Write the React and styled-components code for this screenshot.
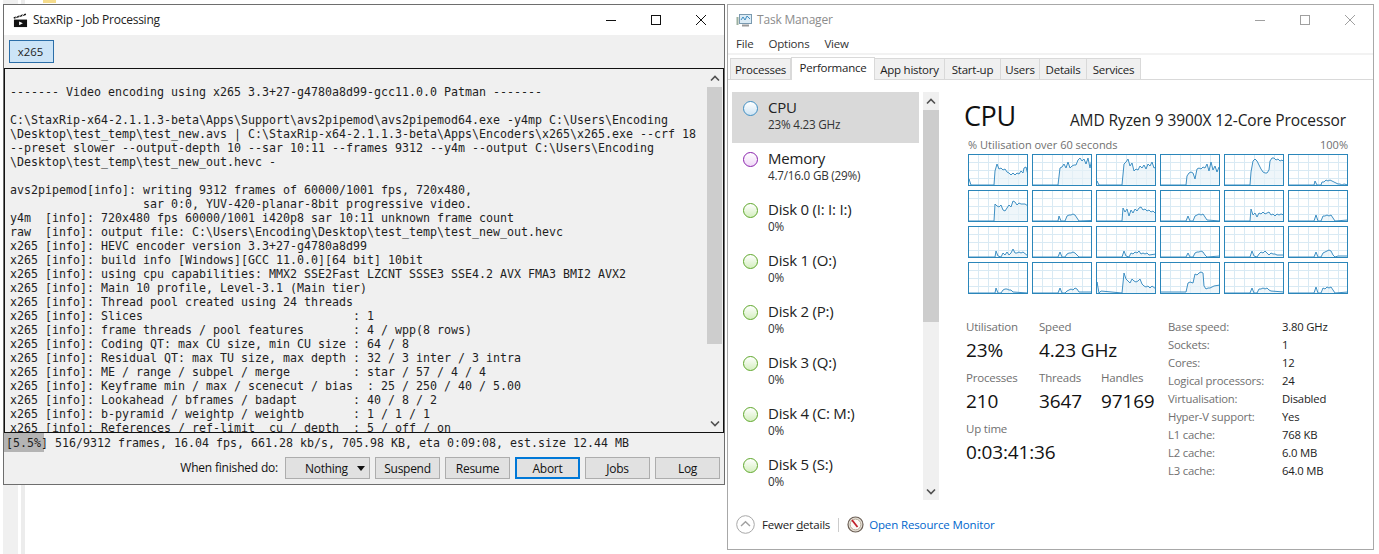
import React from "react";
import styled, { createGlobalStyle } from "styled-components";

const ui = `"Open Sans", "Noto Sans", sans-serif`;
const mono = `"DejaVu Sans Mono", "Liberation Mono", monospace`;

const Global = createGlobalStyle`
  html, body { margin: 0; padding: 0; background: #fff; }
  body { width: 1379px; height: 554px; overflow: hidden; font-family: ${ui}; }
  #root { width: 1379px; height: 554px; }
`;

const Desktop = styled.div`
  position: relative;
  width: 1379px;
  height: 554px;
  background: #fff;
  overflow: hidden;
`;
const BackStrip = styled.div`
  position: absolute;
  left: 3px;
  top: 0;
  bottom: 0;
  width: 15px;
  background: #f0f0f0;
  border-right: 3px solid #fff;
  box-shadow: 4px 0 0 #ececec;
  clip-path: inset(0 -5px 0 0);
`;
const BackFolder = styled.div`
  position: absolute;
  left: 43px;
  top: 0;
  width: 13px;
  height: 3px;
  background: #f6dc8c;
`;
const Win = styled.div`
  position: absolute;
  left: ${(p) => p.$x}px;
  top: ${(p) => p.$y}px;
  width: ${(p) => p.$w}px;
  height: ${(p) => p.$h}px;
  box-sizing: border-box;
  border: 1px solid ${(p) => p.$edge};
  background: ${(p) => p.$bg};
  display: flex;
  flex-direction: column;
`;
const TitleBar = styled.div`
  flex: 0 0 30px;
  display: flex;
  align-items: center;
  background: #fff;
  padding-left: ${(p) => p.$pad}px;
`;
const TitleText = styled.span`
  font-size: 12px;
  letter-spacing: ${(p) => p.$ls}px;
  color: ${(p) => p.$c};
  flex: 1;
  margin-left: ${(p) => p.$ml}px;
  padding-bottom: 2px;
`;
const Caption = styled.div`
  display: flex;
  align-items: center;
  justify-content: center;
  width: ${(p) => p.$w}px;
  height: 30px;
`;

/* StaxRip */
const Toolbar = styled.div`
  flex: 0 0 33px;
  box-sizing: border-box;
  padding: 5px 0 0 5px;
`;
const TabChip = styled.div`
  box-sizing: border-box;
  width: 45px;
  height: 23px;
  padding-right: 2px;
  border: 1px solid #2b6ea8;
  background: #cce4f7;
  display: flex;
  align-items: center;
  justify-content: center;
  font-size: 11.3px;
  color: #222;
`;
const LogBox = styled.div`
  flex: 0 0 365px;
  box-sizing: border-box;
  border: 1px solid #111;
  display: flex;
  background: #f0f0f0;
  overflow: hidden;
`;
const LogText = styled.pre`
  flex: 1;
  margin: 0;
  padding: 2px 0 0 5px;
  font-family: ${mono};
  font-size: 11.63px;
  line-height: 14px;
  color: #1e1e1e;
  overflow: hidden;
`;
const Scroll = styled.div`
  flex: 0 0 ${(p) => p.$w}px;
  height: ${(p) => p.$h};
  margin-right: ${(p) => p.$mr}px;
  background: #f0f0f0;
  display: flex;
  flex-direction: column;
`;
const ScrollEnd = styled.div`
  flex: 0 0 18px;
  display: flex;
  align-items: center;
  justify-content: center;
`;
const ScrollThumb = styled.div`
  flex: 0 0 ${(p) => p.$h}px;
  background: #cdcdcd;
`;
const ScrollGap = styled.div`
  flex: 1;
`;
const Status = styled.div`
  flex: 0 0 20px;
  position: relative;
  display: flex;
  align-items: center;
  padding-left: 2px;
  font-family: ${mono};
  font-size: 11.63px;
  color: #1e1e1e;
  white-space: pre;
`;
const Progress = styled.div`
  position: absolute;
  left: 0;
  top: 0;
  bottom: 1px;
  background: #b4b4b4;
`;
const StatusText = styled.span`
  position: relative;
`;
const Actions = styled.div`
  flex: 1;
  display: flex;
  align-items: flex-start;
  justify-content: flex-end;
  gap: 5px;
  padding: 4px 4px 0 0;
`;
const ActionLabel = styled.span`
  font-size: 12px;
  letter-spacing: -0.2px;
  color: #111;
  line-height: 22px;
  margin-right: 2px;
`;
const Btn = styled.div`
  box-sizing: border-box;
  width: ${(p) => p.$w}px;
  height: 22px;
  background: #e1e1e1;
  border: ${(p) => (p.$primary ? "2px solid #0078d7" : "1px solid #adadad")};
  display: flex;
  align-items: center;
  justify-content: center;
  font-size: 12px;
  letter-spacing: -0.3px;
  color: #111;
`;
const DropBtn = styled(Btn)`
  justify-content: flex-start;
  padding-left: 19px;
  gap: 9px;
`;

/* Task manager */
const MenuBar = styled.div`
  flex: 0 0 20px;
  display: flex;
  padding: 0 0 2px 8px;
  gap: 15px;
  align-items: center;
  font-size: 11.5px;
  letter-spacing: -0.2px;
  color: #333;
  border-bottom: 2px solid #f2f2f2;
  box-sizing: border-box;
`;
const Tabs = styled.div`
  flex: 0 0 25px;
  display: flex;
  align-items: flex-end;
  padding-left: 2px;
  border-bottom: 1px solid #d9d9d9;
  box-sizing: border-box;
  position: relative;
`;
const Tab = styled.div`
  box-sizing: border-box;
  width: ${(p) => p.$w}px;
  height: ${(p) => (p.$on ? 23 : 21)}px;
  margin-bottom: ${(p) => (p.$on ? -1 : 0)}px;
  background: ${(p) => (p.$on ? "#fff" : "#f0f0f0")};
  border: 1px solid #d9d9d9;
  border-left-width: ${(p) => (p.$first || p.$on ? 1 : 0)}px;
  border-bottom: ${(p) => (p.$on ? "none" : "0")};
  display: flex;
  align-items: center;
  justify-content: center;
  padding-bottom: ${(p) => (p.$on ? 3 : 0)}px;
  font-size: 11.5px;
  letter-spacing: -0.25px;
  color: #1c1c1c;
  white-space: nowrap;
`;
const Body = styled.div`
  flex: 1;
  display: flex;
  padding: 12px 0 0 4px;
  min-height: 0;
`;
const Side = styled.div`
  flex: 0 0 187px;
  height: 408px;
  margin-right: 4px;
`;
const Row = styled.div`
  box-sizing: border-box;
  height: 51px;
  padding-left: 11px;
  display: flex;
  align-items: flex-start;
  background: ${(p) => (p.$on ? "#d9d9d9" : "transparent")};
`;
const Dot = styled.div`
  box-sizing: border-box;
  width: 15px;
  height: 15px;
  margin-top: 9px;
  border-radius: 50%;
  border: 1px solid ${(p) => p.$c};
  background: linear-gradient(180deg, #fff 0%, ${(p) => p.$f} 100%);
  flex: none;
`;
const RowText = styled.div`
  margin-left: 10px;
  display: flex;
  flex-direction: column;
  padding-top: 4px;
`;
const RowTitle = styled.div`
  font-size: 15px;
  line-height: 22px;
  color: #222;
  letter-spacing: -0.22px;
`;
const RowSub = styled.div`
  font-size: 11.7px;
  line-height: 13px;
  letter-spacing: -0.22px;
  color: #333;
`;
const Pane = styled.div`
  flex: 1;
  padding-left: 29px;
  display: flex;
  flex-direction: column;
`;
const Head = styled.div`
  display: flex;
  align-items: baseline;
  justify-content: space-between;
  height: 42px;
  padding-right: 27px;
  margin-left: -4px;
`;
const Big = styled.div`
  font-size: 27px;
  line-height: 48px;
  color: #111;
  letter-spacing: -0.4px;
`;
const Model = styled.div`
  font-size: 15.5px;
  color: #222;
  letter-spacing: -0.1px;
`;
const AxisRow = styled.div`
  display: flex;
  justify-content: space-between;
  width: 380px;
  font-size: 11px;
  line-height: 16px;
  color: #707070;
  margin-top: 3px;
`;
const Graphs = styled.div`
  display: grid;
  grid-template-columns: repeat(6, 60px);
  grid-auto-rows: 32px;
  gap: 4px;
  margin-top: 1px;
`;
const GraphSvg = styled.svg`
  display: block;
`;
const StatsWrap = styled.div`
  display: flex;
  margin-top: 24px;
  margin-left: -2px;
`;
const StatsLeft = styled.div`
  width: 202px;
  display: grid;
  grid-template-columns: 73px 62px auto;
  grid-auto-rows: 51px;
`;
const Stat = styled.div`
  grid-column: span ${(p) => p.$span || 1};
  display: flex;
  flex-direction: column;
  white-space: nowrap;
`;
const StatLabel = styled.div`
  font-size: 11.5px;
  line-height: 18px;
  letter-spacing: -0.2px;
  color: #707070;
`;
const StatValue = styled.div`
  font-size: 19px;
  line-height: 28px;
  letter-spacing: -0.15px;
  color: #111;
`;
const Facts = styled.div`
  display: grid;
  grid-template-columns: 114px auto;
  grid-auto-rows: 18px;
  font-size: 11.3px;
  line-height: 18px;
  letter-spacing: -0.2px;
`;
const FactKey = styled.div`
  color: #707070;
  white-space: nowrap;
`;
const FactVal = styled.div`
  color: #222;
  white-space: nowrap;
`;
const Footer = styled.div`
  flex: 0 0 49px;
  display: flex;
  align-items: center;
  padding: 0 0 0 8px;
  font-size: 11.5px;
  letter-spacing: -0.2px;
  color: #222;
`;
const FewerText = styled.span`
  margin-left: 7px;
  u { text-underline-offset: 1px; }
`;
const FootSep = styled.div`
  width: 1px;
  height: 14px;
  background: #ccc;
  margin: 0 8px 0 8px;
`;
const FootLink = styled.span`
  color: #0066cc;
  margin-left: 5px;
  letter-spacing: -0.13px;
`;

const Chevron = ({ up, c = "#505050" }) => (
  <svg width="10" height="7" viewBox="0 0 10 7">
    <path d={up ? "M1 5.5 L5 1.5 L9 5.5" : "M1 1.5 L5 5.5 L9 1.5"} fill="none" stroke={c} strokeWidth="1.6" />
  </svg>
);

const Clapper = () => (
  <svg width="15" height="15" viewBox="0 0 16 16">
    <path d="M1 7h14v8H1z" fill="#111" />
    <path d="M1 6 L14 2 L13.5 0.5 L0.6 4.4z" fill="#111" />
    <path d="M3 5 L4.5 2.9 M6.5 4 L8 1.9 M10 3 L11.5 0.9" stroke="#fff" strokeWidth="1" />
    <path d="M6.5 9 L10.5 11 L6.5 13z" fill="#fff" />
  </svg>
);
const Tm = () => (
  <svg width="16" height="16" viewBox="0 0 16 16">
    <rect x="0.5" y="5" width="2" height="8" fill="#9bb0a0" />
    <rect x="3.5" y="2.5" width="12" height="9" fill="#dcecf6" stroke="#7a9ab0" />
    <path d="M5 8 L7 5 L9 8 L11 4 L14 7" fill="none" stroke="#3f8cc0" />
    <rect x="6" y="12.5" width="7" height="2" fill="#9a9a9a" />
  </svg>
);
const Gauge = () => (
  <svg width="17" height="17" viewBox="0 0 17 17">
    <circle cx="8.5" cy="8.5" r="7.5" fill="#e9e3da" stroke="#6b5f55" strokeWidth="1.2" />
    <circle cx="8.5" cy="8.5" r="5.4" fill="#fbfaf6" stroke="#b5a998" />
    <path d="M5 4 L10.5 11" stroke="#c0202a" strokeWidth="1.8" />
  </svg>
);

const points = [
  "0,31 1,25 3,31 26,31 27,17 29,10 31,15 33,14 35,16 37,15 39,18 41,19 43,21 45,19 47,21 49,19 51,20 53,17 55,19 56,14 58,13 60,21",
  "0,31 26,31 28,14 30,13 32,10 34,14 36,8 38,14 40,12 42,11 44,11 46,6 48,4 50,7 52,5 54,10 56,4 58,14 60,5",
  "0,31 1,27 3,31 26,31 28,10 30,8 32,5 34,12 36,9 38,17 40,15 42,16 44,12 46,14 48,11 50,15 52,10 54,12 56,8 58,14 60,13",
  "0,31 26,31 27,22 29,19 31,18 33,19 35,25 37,15 39,14 41,15 43,13 45,14 47,10 49,17 51,8 53,16 55,12 57,18 59,13 60,12",
  "0,31 26,31 27,18 29,7 31,5 33,7 35,11 37,15 39,18 41,19 43,19 45,16 46,7 48,4 50,4 52,6 54,5 56,7 58,6 60,8",
  "0,31 26,31 27,27 29,31 33,31 34,28 36,28 38,26 40,27 42,26 44,27 46,28 48,29 50,30 52,30 54,31 56,30 60,31",
  "0,31 26,31 27,14 29,16 31,17 33,15 35,20 37,21 39,18 41,15 43,17 45,11 47,12 49,15 51,13 53,14 55,14 57,14 60,16",
  "0,31 26,31 27,26 29,31 33,31 35,26 37,25 39,25 41,24 43,25 45,28 47,31 60,30.5",
  "0,31 26,31 27,18 29,22 31,19 33,26 35,20 37,23 39,19 41,21 43,18 45,17 47,20 49,19 51,21 53,20 55,22 57,21 60,24",
  "0,31 26,31 28,26 30,31 33,31 35,26 37,25 39,24 41,25 43,24 45,27 47,30 60,31",
  "0,31 26,31 27,19 29,25 31,23 33,27 35,23 37,24 39,22 41,24 43,23 45,22 47,25 49,24 51,26 53,24 55,25 57,24 60,25",
  "0,31 26,31 28,25 30,31 33,31 35,26 37,26 39,25 41,26 43,25 45,28 47,31 60,30",
  "0,31 27,31 28,25 30,30 33,31 35,27 37,29 39,26 41,29 43,27 45,23 47,27 49,27 51,26 53,27 55,26 60,30",
  "0,31 26,31 28,26 30,31 33,31 35,28 37,27 39,27 41,26 43,27 45,29 47,31 60,31",
  "0,31 26,31 28,25 30,30 33,31 35,27 37,28 39,26 41,27 43,25 45,28 47,27 49,28 51,27 53,29 60,28",
  "0,31 26,31 28,27 30,31 33,31 35,27 37,26 39,26 41,25 43,26 45,29 47,31 60,30",
  "0,31 26,31 28,25 30,30 33,31 35,28 37,26 39,27 41,25 43,27 45,29 47,27 49,28 51,28 53,29 60,29",
  "0,31 26,31 28,26 30,31 33,31 35,27 37,26 39,25 41,24 43,25 45,29 47,31 50,30 60,30",
  "0,31 27,31 28,26 30,31 33,31 35,28 37,27 39,27 41,28 43,28 45,30 60,31",
  "0,31 26,31 28,26 30,31 33,31 35,29 37,28 39,27 41,28 43,26 45,27 47,30 60,30",
  "0,31 1,20 3,31 5,29 26,31 28,11 30,17 32,19 34,21 36,17 38,19 40,20 42,19 44,17 46,22 48,24 50,25 52,24 54,26 56,24 60,27",
  "0,30 26,30 28,21 30,20 33,21 35,12 37,13 39,11 41,10 43,11 44,24 46,27 48,26 50,26 52,25 54,24 60,23",
  "0,31 26,31 28,26 30,31 33,31 35,27 37,27 39,26 41,27 43,26 45,28 47,29 60,30",
  "0,31 26,31 28,25 30,31 33,31 35,26 37,27 39,25 41,26 43,25 45,28 47,31 60,30",
];

const Graph = ({ pts }) => (
  <GraphSvg width="60" height="32" viewBox="0 0 60 32">
    <rect x="0.5" y="0.5" width="59" height="31" fill="#fff" />
    {[10, 20, 30, 40, 50].map((x) => (
      <line key={x} x1={x + 0.5} y1="1" x2={x + 0.5} y2="31" stroke="#d9eaf4" />
    ))}
    {[8, 16, 24].map((y) => (
      <line key={y} x1="1" y1={y + 0.5} x2="59" y2={y + 0.5} stroke="#d9eaf4" />
    ))}
    <polygon points={`0,31 ${pts} 60,31`} fill="#e6f1f8" fillOpacity="0.65" />
    <polyline points={pts} fill="none" stroke="#3f90c4" strokeWidth="1" />
    <rect x="0.5" y="0.5" width="59" height="31" fill="none" stroke="#2b86ba" />
  </GraphSvg>
);

const log = `
------- Video encoding using x265 3.3+27-g4780a8d99-gcc11.0.0 Patman -------

C:\\StaxRip-x64-2.1.1.3-beta\\Apps\\Support\\avs2pipemod\\avs2pipemod64.exe -y4mp C:\\Users\\Encoding
\\Desktop\\test_temp\\test_new.avs | C:\\StaxRip-x64-2.1.1.3-beta\\Apps\\Encoders\\x265\\x265.exe --crf 18
--preset slower --output-depth 10 --sar 10:11 --frames 9312 --y4m --output C:\\Users\\Encoding
\\Desktop\\test_temp\\test_new_out.hevc -

avs2pipemod[info]: writing 9312 frames of 60000/1001 fps, 720x480,
                   sar 0:0, YUV-420-planar-8bit progressive video.
y4m  [info]: 720x480 fps 60000/1001 i420p8 sar 10:11 unknown frame count
raw  [info]: output file: C:\\Users\\Encoding\\Desktop\\test_temp\\test_new_out.hevc
x265 [info]: HEVC encoder version 3.3+27-g4780a8d99
x265 [info]: build info [Windows][GCC 11.0.0][64 bit] 10bit
x265 [info]: using cpu capabilities: MMX2 SSE2Fast LZCNT SSSE3 SSE4.2 AVX FMA3 BMI2 AVX2
x265 [info]: Main 10 profile, Level-3.1 (Main tier)
x265 [info]: Thread pool created using 24 threads
x265 [info]: Slices                              : 1
x265 [info]: frame threads / pool features       : 4 / wpp(8 rows)
x265 [info]: Coding QT: max CU size, min CU size : 64 / 8
x265 [info]: Residual QT: max TU size, max depth : 32 / 3 inter / 3 intra
x265 [info]: ME / range / subpel / merge         : star / 57 / 4 / 4
x265 [info]: Keyframe min / max / scenecut / bias  : 25 / 250 / 40 / 5.00
x265 [info]: Lookahead / bframes / badapt        : 40 / 8 / 2
x265 [info]: b-pyramid / weightp / weightb       : 1 / 1 / 1
x265 [info]: References / ref-limit  cu / depth  : 5 / off / on`;

const disks = [
  ["CPU", "23%  4.23 GHz", "#3f8fc4", "#cfe4f3", true],
  ["Memory", "4.7/16.0 GB (29%)", "#8b24ad", "#f0d9f7"],
  ["Disk 0 (I: I: I:)", "0%", "#5fa82c", "#d5efc0"],
  ["Disk 1 (O:)", "0%", "#5fa82c", "#d5efc0"],
  ["Disk 2 (P:)", "0%", "#5fa82c", "#d5efc0"],
  ["Disk 3 (Q:)", "0%", "#5fa82c", "#d5efc0"],
  ["Disk 4 (C: M:)", "0%", "#5fa82c", "#d5efc0"],
  ["Disk 5 (S:)", "0%", "#5fa82c", "#d5efc0"],
];
const tabs = [
  ["Processes", 61],
  ["Performance", 84, true],
  ["App history", 70],
  ["Start-up", 56],
  ["Users", 39],
  ["Details", 47],
  ["Services", 54],
];
const facts = [
  ["Base speed:", "3.80 GHz"],
  ["Sockets:", "1"],
  ["Cores:", "12"],
  ["Logical processors:", "24"],
  ["Virtualisation:", "Disabled"],
  ["Hyper-V support:", "Yes"],
  ["L1 cache:", "768 KB"],
  ["L2 cache:", "6.0 MB"],
  ["L3 cache:", "64.0 MB"],
];

const Min = ({ c }) => (
  <svg width="12" height="12" viewBox="0 0 12 12"><path d="M1 6.5h10" stroke={c} /></svg>
);
const Max = ({ c }) => (
  <svg width="12" height="12" viewBox="0 0 12 12"><rect x="1.5" y="1.5" width="9" height="9" fill="none" stroke={c} /></svg>
);
const Close = ({ c }) => (
  <svg width="12" height="12" viewBox="0 0 12 12"><path d="M1 1 L11 11 M11 1 L1 11" stroke={c} /></svg>
);

export default function App() {
  return (
    <Desktop>
      <Global />
      <BackStrip />
      <BackFolder />

      <Win $x={3} $y={4} $w={722} $h={481} $edge="#6e6e6e" $bg="#f0f0f0">
        <TitleBar $pad={9}>
          <Clapper />
          <TitleText $c="#222" $ls={-0.25} $ml={5}>StaxRip - Job Processing</TitleText>
          <Caption $w={45}><Min c="#111" /></Caption>
          <Caption $w={45}><Max c="#111" /></Caption>
          <Caption $w={46}><Close c="#111" /></Caption>
        </TitleBar>
        <Toolbar><TabChip>x265</TabChip></Toolbar>
        <LogBox>
          <LogText>{log}</LogText>
          <Scroll $w={15} $mr={1} $h="auto">
            <ScrollEnd><Chevron up /></ScrollEnd>
            <ScrollThumb $h={257} />
            <ScrollGap />
            <ScrollEnd><Chevron /></ScrollEnd>
          </Scroll>
        </LogBox>
        <Status>
          <Progress style={{ width: "40px" }} />
          <StatusText>[5.5%] 516/9312 frames, 16.04 fps, 661.28 kb/s, 705.98 KB, eta 0:09:08, est.size 12.44 MB</StatusText>
        </Status>
        <Actions>
          <ActionLabel>When finished do:</ActionLabel>
          <DropBtn $w={85}>
            Nothing
            <svg width="8" height="5" viewBox="0 0 8 5"><path d="M0 0h8L4 5z" fill="#111" /></svg>
          </DropBtn>
          <Btn $w={65}>Suspend</Btn>
          <Btn $w={65}>Resume</Btn>
          <Btn $w={65} $primary>Abort</Btn>
          <Btn $w={65}>Jobs</Btn>
          <Btn $w={65}>Log</Btn>
        </Actions>
      </Win>

      <Win $x={727} $y={4} $w={647} $h={546} $edge="#a8a8a8" $bg="#fff">
        <TitleBar $pad={8}>
          <Tm />
          <TitleText $c="#8c8c8c" $ls={-0.2} $ml={5}>Task Manager</TitleText>
          <Caption $w={45}><Min c="#a0a0a0" /></Caption>
          <Caption $w={45}><Max c="#a0a0a0" /></Caption>
          <Caption $w={46}><Close c="#a0a0a0" /></Caption>
        </TitleBar>
        <MenuBar>
          <span>File</span>
          <span>Options</span>
          <span>View</span>
        </MenuBar>
        <Tabs>
          {tabs.map(([t, w, on], i) => (
            <Tab key={t} $w={w} $on={on} $first={i === 0}>{t}</Tab>
          ))}
        </Tabs>
        <Body>
          <Side>
            {disks.map(([t, s, c, f, on]) => (
              <Row key={t} $on={on}>
                <Dot $c={c} $f={f} />
                <RowText>
                  <RowTitle>{t}</RowTitle>
                  <RowSub>{s}</RowSub>
                </RowText>
              </Row>
            ))}
          </Side>
          <Scroll $w={16} $mr={0} $h="408px">
            <ScrollEnd><Chevron up /></ScrollEnd>
            <ScrollThumb $h={212} />
            <ScrollGap />
            <ScrollEnd><Chevron /></ScrollEnd>
          </Scroll>
          <Pane>
            <Head>
              <Big>CPU</Big>
              <Model>AMD Ryzen 9 3900X 12-Core Processor</Model>
            </Head>
            <AxisRow>
              <span>% Utilisation over 60 seconds</span>
              <span>100%</span>
            </AxisRow>
            <Graphs>
              {points.map((p, i) => <Graph key={i} pts={p} />)}
            </Graphs>
            <StatsWrap>
              <StatsLeft>
                <Stat><StatLabel>Utilisation</StatLabel><StatValue>23%</StatValue></Stat>
                <Stat $span={2}><StatLabel>Speed</StatLabel><StatValue>4.23 GHz</StatValue></Stat>
                <Stat><StatLabel>Processes</StatLabel><StatValue>210</StatValue></Stat>
                <Stat><StatLabel>Threads</StatLabel><StatValue>3647</StatValue></Stat>
                <Stat><StatLabel>Handles</StatLabel><StatValue>97169</StatValue></Stat>
                <Stat $span={3}><StatLabel>Up time</StatLabel><StatValue>0:03:41:36</StatValue></Stat>
              </StatsLeft>
              <Facts>
                {facts.map(([k, v]) => (
                  <React.Fragment key={k}>
                    <FactKey>{k}</FactKey>
                    <FactVal>{v}</FactVal>
                  </React.Fragment>
                ))}
              </Facts>
            </StatsWrap>
          </Pane>
        </Body>
        <Footer>
          <svg width="19" height="19" viewBox="0 0 19 19">
            <circle cx="9.5" cy="9.5" r="8.8" fill="#fff" stroke="#a8a8a8" />
            <path d="M5 11 L9.5 6.8 L14 11" fill="none" stroke="#a0a0a0" strokeWidth="1.4" />
          </svg>
          <FewerText>Fewer <u>d</u>etails</FewerText>
          <FootSep />
          <Gauge />
          <FootLink>Open Resource Monitor</FootLink>
        </Footer>
      </Win>
    </Desktop>
  );
}
